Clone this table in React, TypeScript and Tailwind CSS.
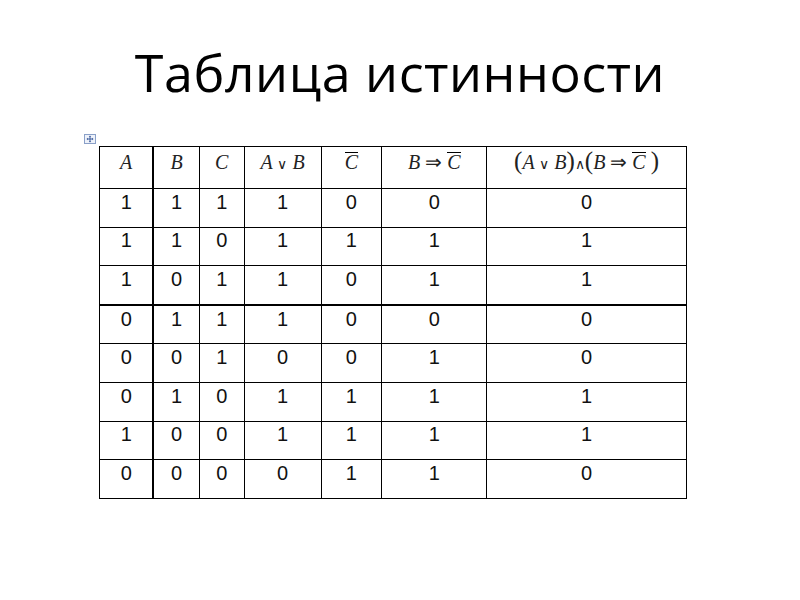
const rows = [
  [1, 1, 1, 1, 0, 0, 0],
  [1, 1, 0, 1, 1, 1, 1],
  [1, 0, 1, 1, 0, 1, 1],
  [0, 1, 1, 1, 0, 0, 0],
  [0, 0, 1, 0, 0, 1, 0],
  [0, 1, 0, 1, 1, 1, 1],
  [1, 0, 0, 1, 1, 1, 1],
  [0, 0, 0, 0, 1, 1, 0],
];

const widths = ["w-[54px]", "w-[46px]", "w-[45px]", "w-[77px]", "w-[61px]", "w-[105px]", "w-[200px]"];

const Bar = ({ children }: { children: React.ReactNode }) => (
  <span className="inline-block border-t-[1.5px] border-black leading-[17px] pt-[1px]">{children}</span>
);

const serif = "font-['Liberation_Serif',serif] italic text-[20px] leading-[20px] text-[#222]";
const paren = "not-italic text-[25px] leading-[20px] font-light";
const op = "not-italic text-[14px] leading-none";

function MoveHandle() {
  return (
    <svg width="12" height="10" viewBox="0 0 12 10" className="absolute left-[-15px] top-[-12px]">
      <rect x="0.5" y="0.5" width="11" height="9" fill="#eef2fa" stroke="#8aa0c8" />
      <path d="M6 2v6M3 5h6" stroke="#3a5a9a" strokeWidth="1" />
      <path d="M6 1.5l-1.2 1.3h2.4zM6 8.5l-1.2-1.3h2.4zM2.5 5l1.3-1.2v2.4zM9.5 5l-1.3-1.2v2.4z" fill="#3a5a9a" />
    </svg>
  );
}

export default function App() {
  const headers: React.ReactNode[] = [
    <span className={serif}>A</span>,
    <span className={serif}>B</span>,
    <span className={serif}>C</span>,
    <span className={serif}>
      A <span className={op}>∨</span> B
    </span>,
    <span className={serif}>
      <Bar>C</Bar>
    </span>,
    <span className={serif}>
      B <span className="not-italic leading-none">⇒</span> <Bar>C</Bar>
    </span>,
    <span className={`${serif} whitespace-nowrap`}>
      <span className={paren}>(</span>A{" "}
      <span className={op}>∨</span> B
      <span className={paren}>)</span>
      <span className={op}>∧</span>
      <span className={paren}>(</span>B{" "}
      <span className="not-italic leading-none">⇒</span> <Bar>C</Bar>{" "}
      <span className={paren}>)</span>
    </span>,
  ];

  return (
    <div className="w-[800px] h-[600px] bg-white flex flex-col">
      <h1 className="mt-[38px] text-center font-['Open_Sans',sans-serif] text-[52px] leading-[68px] text-black tracking-[0.5px]">
        Таблица истинности
      </h1>
      <div className="relative ml-[99px] mt-[40px] w-[588px]">
        <MoveHandle />
        <table className="border-collapse">
          <tbody>
            <tr>
              {headers.map((h, i) => (
                <td
                  key={i}
                  className={`${widths[i]} border border-black p-0 ${i === 1 ? "border-l-2" : ""}`}
                >
                  <div className="h-[41px] flex items-center justify-center pb-[12px]">{h}</div>
                </td>
              ))}
            </tr>
            {rows.map((r, ri) => (
              <tr key={ri}>
                {r.map((v, ci) => (
                  <td
                    key={ci}
                    className={`${widths[ci]} border border-black p-0 ${ci === 1 ? "border-l-2" : ""} ${ri === 3 ? "border-t-2" : ""}`}
                  >
                    <div className="h-[37.6px] flex items-center justify-center pb-[12px] font-['Liberation_Sans',sans-serif] text-[20px] leading-[24px] text-[#111]">
                      {v}
                    </div>
                  </td>
                ))}
              </tr>
            ))}
          </tbody>
        </table>
      </div>
    </div>
  );
}
